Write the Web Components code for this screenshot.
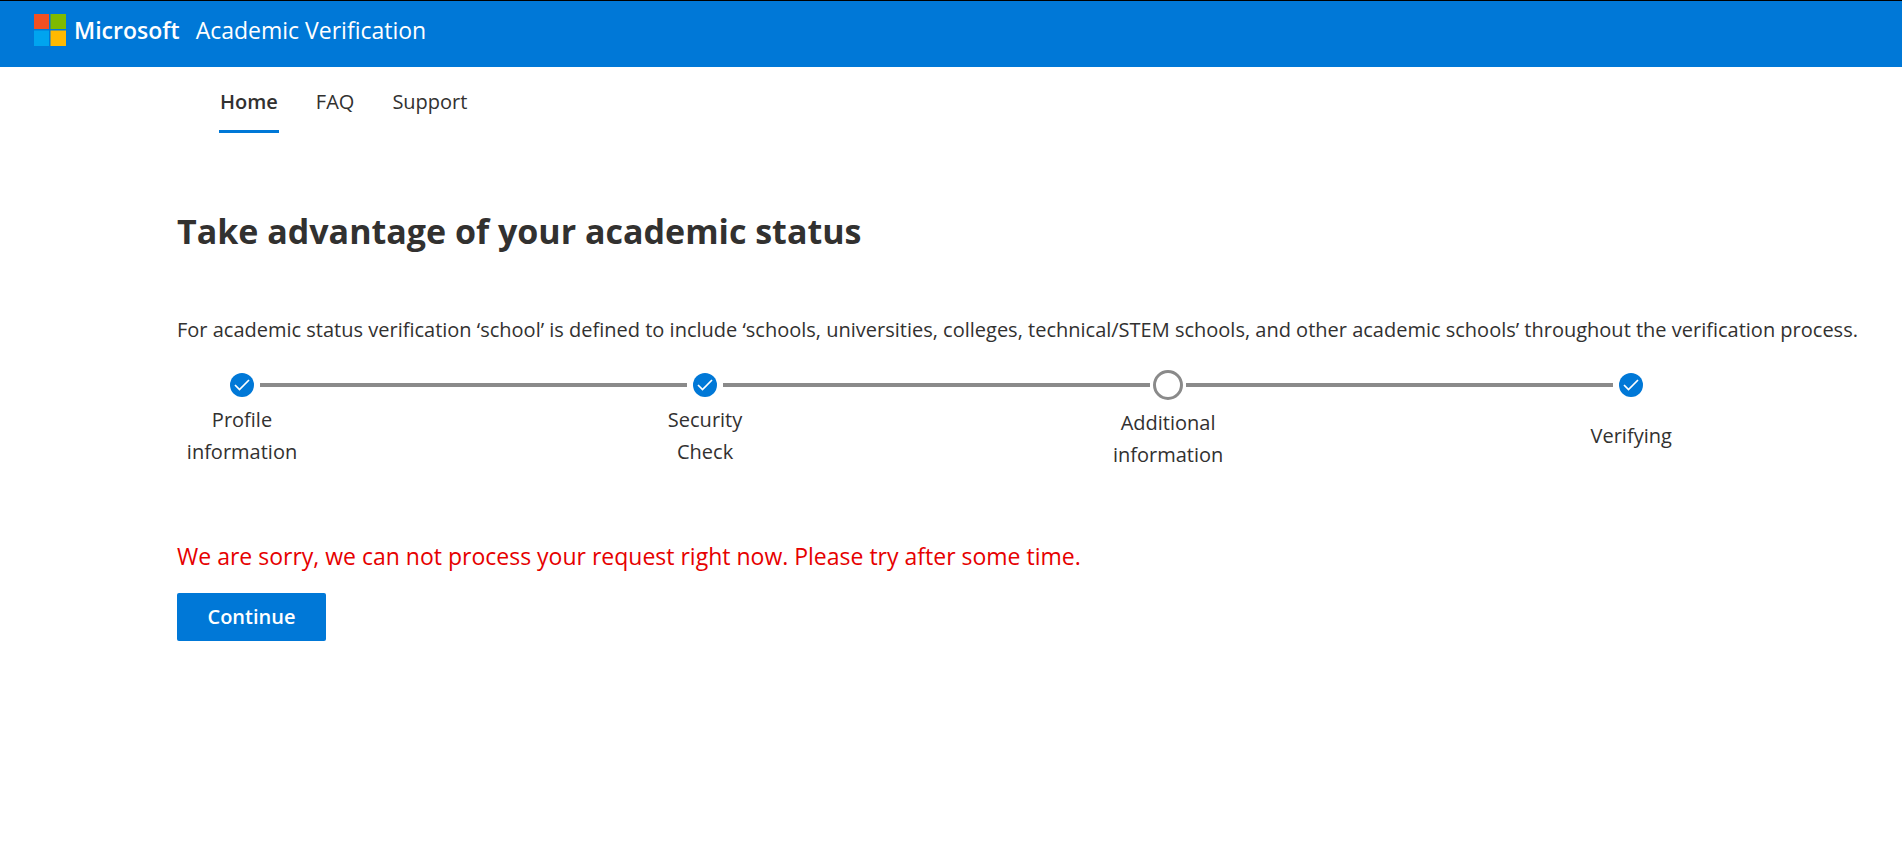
<!DOCTYPE html>
<html lang="en">
<head>
<meta charset="utf-8">
<title>Academic Verification</title>
<style>
body {
  margin: 0;
  background: #fff;
  color: #323130;
  font-family: "Segoe UI", "Open Sans", "Noto Sans", sans-serif;
  font-size: 20px;
  line-height: 32px;
}
</style>
</head>
<body>
<verification-page></verification-page>

<script>
function define(name, html) {
  const template = document.createElement('template');
  template.innerHTML = html;
  customElements.define(name, class extends HTMLElement {
    constructor() {
      super();
      this.attachShadow({mode: 'open'});
      this.shadowRoot.append(template.content.cloneNode(true));
    }
  });
}

// Four colour squares and the company name
define('brand-logo', `
<style>
:host {
  display: flex;
  align-items: center;
  gap: 8px;
  color: #fff;
  font-size: 23px;
  font-weight: 600;
}
svg {
  display: block;
}
</style>
<svg width="32" height="32" viewBox="0 0 32 32" aria-hidden="true">
  <path fill="#f25022" d="M0 0h15v15H0z"/>
  <path fill="#7fba00" d="M16.500 0H32v15H16.500z"/>
  <path fill="#00a4ef" d="M0 16.500h15V32H0z"/>
  <path fill="#ffb900" d="M16.500 16.500H32V32H16.500z"/>
</svg>
<span>Microsoft</span>
`);

define('site-header', `
<style>
:host {
  display: block;
}
header {
  display: flex;
  align-items: center;
  gap: 16px;
  height: 58px;
  padding: 0 34px 8px;
  border-top: 1px solid #000;
  background: #0078d7;
  color: #fff;
  font-size: 23px;
}
</style>
<header><brand-logo></brand-logo><span><slot></slot></span></header>
`);

define('nav-tab', `
<style>
:host {
  display: block;
}
a {
  display: block;
  padding: 19px 1px 12px;
  border-bottom: 3px solid transparent;
  color: inherit;
  text-decoration: none;
}
:host([selected]) a {
  border-color: #0078d7;
  font-weight: 600;
}
</style>
<a href="#"><slot></slot></a>
`);

define('nav-tabs', `
<style>
:host {
  display: block;
}
nav {
  display: flex;
  gap: 36px;
  padding-left: 219px;
}
</style>
<nav><slot></slot></nav>
`);

// Marker with its label below; the label is wider than the marker's box
define('progress-step', `
<style>
:host {
  display: flex;
  flex-direction: column;
  align-items: center;
  width: 36px;
}
svg {
  display: block;
  flex: none;
}
.done {
  margin-top: 3px;
}
:host([open]) .done,
:host(:not([open])) .ring {
  display: none;
}
.label {
  display: flex;
  align-items: center;
  justify-content: center;
  width: 130px;
  min-height: 64px;
  margin-top: 7px;
  text-align: center;
}
.label span {
  width: min-content;
}
</style>
<svg class="done" width="24" height="24" viewBox="0 0 24 24" aria-hidden="true">
  <circle cx="12" cy="12" r="12" fill="#0078d7"/>
  <path d="M5 12l4.500 4.500L19 7" fill="none" stroke="#fff" stroke-width="1.700"/>
</svg>
<svg class="ring" width="30" height="30" viewBox="0 0 30 30" aria-hidden="true">
  <circle cx="15" cy="15" r="13.500" fill="#fff" stroke="#8a8a8a" stroke-width="3"/>
</svg>
<div class="label"><span><slot></slot></span></div>
`);

define('step-line', `
<style>
:host {
  display: block;
  flex: 1;
  height: 4px;
  margin-top: 13px;
  background: #8a8a8a;
}
</style>
`);

define('progress-steps', `
<style>
:host {
  display: flex;
  align-items: flex-start;
  padding: 0 47px;
}
</style>
<slot></slot>
`);

define('primary-button', `
<style>
:host {
  display: block;
}
button {
  min-width: 149px;
  padding: 8px 30px;
  border: 0;
  border-radius: 2px;
  background: #0078d7;
  color: #fff;
  font: inherit;
  font-weight: 600;
  cursor: pointer;
}
</style>
<button type="button"><slot></slot></button>
`);

define('error-message', `
<style>
:host {
  display: block;
}
p {
  margin: 0;
  color: #e60000;
  font-size: 23px;
}
</style>
<p role="alert"><slot></slot></p>
`);

define('verification-page', `
<style>
:host {
  display: block;
}
main {
  padding: 70px 37px 32px 177px;
}
h1 {
  margin: 0;
  font-size: 34px;
  font-weight: 700;
  line-height: 56px;
}
p {
  margin: 55px 0 24px;
}
progress-steps {
  width: 90%;
  box-sizing: border-box;
}
error-message {
  margin: 69px 0 21px;
}
</style>
<site-header>Academic Verification</site-header>
<nav-tabs>
  <nav-tab selected>Home</nav-tab>
  <nav-tab>FAQ</nav-tab>
  <nav-tab>Support</nav-tab>
</nav-tabs>
<main>
  <h1>Take advantage of your academic status</h1>
  <p>For academic status verification ‘school’ is defined to include ‘schools, universities, colleges, technical/STEM schools, and other academic schools’ throughout the verification process.</p>
  <progress-steps>
    <progress-step>Profile information</progress-step>
    <step-line></step-line>
    <progress-step>Security Check</progress-step>
    <step-line></step-line>
    <progress-step open>Additional information</progress-step>
    <step-line></step-line>
    <progress-step>Verifying</progress-step>
  </progress-steps>
  <error-message>We are sorry, we can not process your request right now. Please try after some time.</error-message>
  <primary-button>Continue</primary-button>
</main>
`);
</script>
</body>
</html>
